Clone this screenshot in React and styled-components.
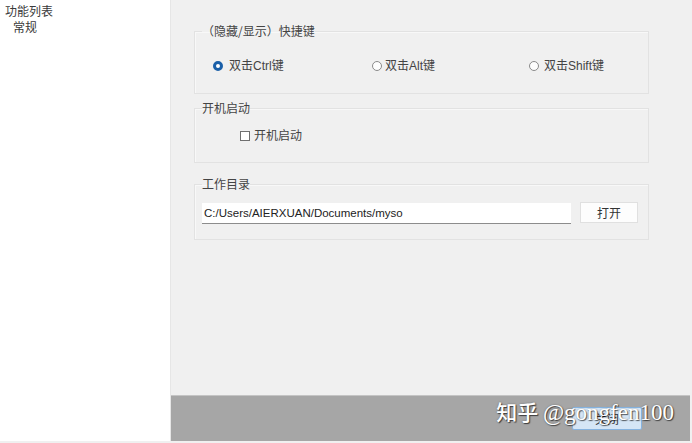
import React from "react";
import styled, { createGlobalStyle } from "styled-components";

const Global = createGlobalStyle`
  html, body { margin: 0; padding: 0; height: 443px; overflow: hidden; background: #f0f0f0; }
  body { font-family: "Liberation Sans", "Noto Sans CJK SC", sans-serif; font-size: 12px; color: #333; }
  * { box-sizing: border-box; }
`;

const Page = styled.div`
  width: 692px;
  height: 443px;
  display: flex;
  flex-direction: column;
  background: #f0f0f0;
`;

const Window = styled.div`
  display: flex;
  height: 441px;
`;

const Sidebar = styled.div`
  width: 171px;
  background: #fff;
  border-right: 1px solid #e6e6e6;
  padding-top: 3px;
  padding-left: 5px;
`;

const TreeItem = styled.div`
  line-height: 16px;
  height: 16px;
  padding-left: ${(p) => p.$indent || 0}px;
  color: #3a3a3a;
  font-family: "Noto Sans CJK SC", sans-serif;
`;

const Main = styled.div`
  flex: 1;
  display: flex;
  flex-direction: column;
  background: #f0f0f0;
`;

const Content = styled.div`
  flex: 1;
  padding: 23px 43px 0 23px;
  display: flex;
  flex-direction: column;
`;

const Group = styled.fieldset`
  margin: ${(p) => p.$mt || 0}px 0 0 0;
  border: 1px solid #e2e2e2;
  box-shadow: inset 1px 1px 0 #f8f8f8;
  padding: ${(p) => p.$pt}px 7px ${(p) => p.$pb}px 7px;
  min-width: 0;
`;

const Legend = styled.legend`
  padding: 0;
  font-family: "Noto Sans CJK SC", sans-serif;
  font-size: 12px;
  line-height: 16px;
  height: 16px;
  color: #444;
`;

const RadioRow = styled.div`
  display: grid;
  grid-template-columns: 159px 157px auto;
  padding-left: 11px;
  height: 16px;
  align-items: center;
`;

const Choice = styled.label`
  display: flex;
  align-items: center;
  gap: ${(p) => p.$gap || 4}px;
  line-height: 16px;
  color: #444;
  font-family: "Liberation Sans", "Noto Sans CJK SC", sans-serif;
`;

const RadioDot = styled.span`
  width: 10px;
  height: 10px;
  border-radius: 50%;
  flex: none;
  ${(p) =>
    p.$checked
      ? `background: #fff; border: 3px solid #1a5fa8;`
      : `background: #fdfdfd; border: 1px solid #8a8a8a;`}
`;

const CheckRow = styled.div`
  padding-left: 38px;
  height: 16px;
  display: flex;
  align-items: center;
`;

const CheckBox = styled.span`
  width: 10px;
  height: 10px;
  border: 1px solid #6f6f6f;
  background: #fff;
  flex: none;
`;

const DirRow = styled.div`
  display: flex;
  align-items: flex-start;
  gap: 9px;
`;

const PathInput = styled.div`
  width: 369px;
  height: 21px;
  background: #fff;
  border-bottom: 1px solid #8c8c8c;
  padding-left: 2px;
  line-height: 21px;
  color: #222;
  font-family: "Liberation Sans", sans-serif;
  font-size: 11.5px;
`;

const OpenButton = styled.button`
  width: 58px;
  height: 21px;
  margin-top: -1px;
  background: #fdfdfd;
  border: 1px solid #e0e0e0;
  font-family: "Noto Sans CJK SC", sans-serif;
  font-size: 12px;
  color: #333;
  padding: 0;
`;

const Footer = styled.div`
  position: relative;
  height: 46px;
  margin-right: 2px;
  background: #a6a6a6;
  border-top: 1px solid #c4c4c4;
  display: flex;
  justify-content: flex-end;
  padding: 11px 48px 0 0;
`;

const CloseButton = styled.button`
  width: 70px;
  height: 23px;
  background: #d5e6f6;
  border: 1px solid #86b3df;
  border-radius: 2px;
  font-family: "Noto Sans CJK SC", sans-serif;
  font-size: 12px;
  color: #333;
  padding: 0;
`;

const Watermark = styled.div`
  position: absolute;
  right: 16px;
  top: 1px;
  font-family: "Noto Sans CJK SC", "Liberation Serif", serif;
  font-size: 21px;
  font-weight: 500;
  line-height: 28px;
  color: #fff;
  text-shadow: 1px 1px 1px rgba(0, 0, 0, 0.6), 0 0 2px rgba(0, 0, 0, 0.35);
  white-space: nowrap;
`;

const WmLatin = styled.span`
  font-family: "Liberation Serif", serif;
  font-weight: 400;
  font-size: 23px;
`;

const BottomStrip = styled.div`
  height: 2px;
  background: #f0f0f0;
`;

export default function App() {
  return (
    <Page>
      <Global />
      <Window>
        <Sidebar>
          <TreeItem>功能列表</TreeItem>
          <TreeItem $indent={8}>常规</TreeItem>
        </Sidebar>
        <Main>
          <Content>
            <Group $pt={19} $pb={19}>
              <Legend>（隐藏/显示）快捷键</Legend>
              <RadioRow>
                <Choice $gap={6}>
                  <RadioDot $checked />
                  双击Ctrl键
                </Choice>
                <Choice $gap={3}>
                  <RadioDot />
                  双击Alt键
                </Choice>
                <Choice $gap={5}>
                  <RadioDot />
                  双击Shift键
                </Choice>
              </RadioRow>
            </Group>
            <Group $mt={6} $pt={12} $pb={18}>
              <Legend>开机启动</Legend>
              <CheckRow>
                <Choice $gap={4}>
                  <CheckBox />
                  开机启动
                </Choice>
              </CheckRow>
            </Group>
            <Group $mt={13} $pt={11} $pb={15}>
              <Legend>工作目录</Legend>
              <DirRow>
                <PathInput>C:/Users/AIERXUAN/Documents/myso</PathInput>
                <OpenButton>打开</OpenButton>
              </DirRow>
            </Group>
          </Content>
          <Footer>
            <CloseButton>关闭</CloseButton>
            <Watermark>
              知乎 <WmLatin>@gongfen100</WmLatin>
            </Watermark>
          </Footer>
        </Main>
      </Window>
      <BottomStrip />
    </Page>
  );
}
